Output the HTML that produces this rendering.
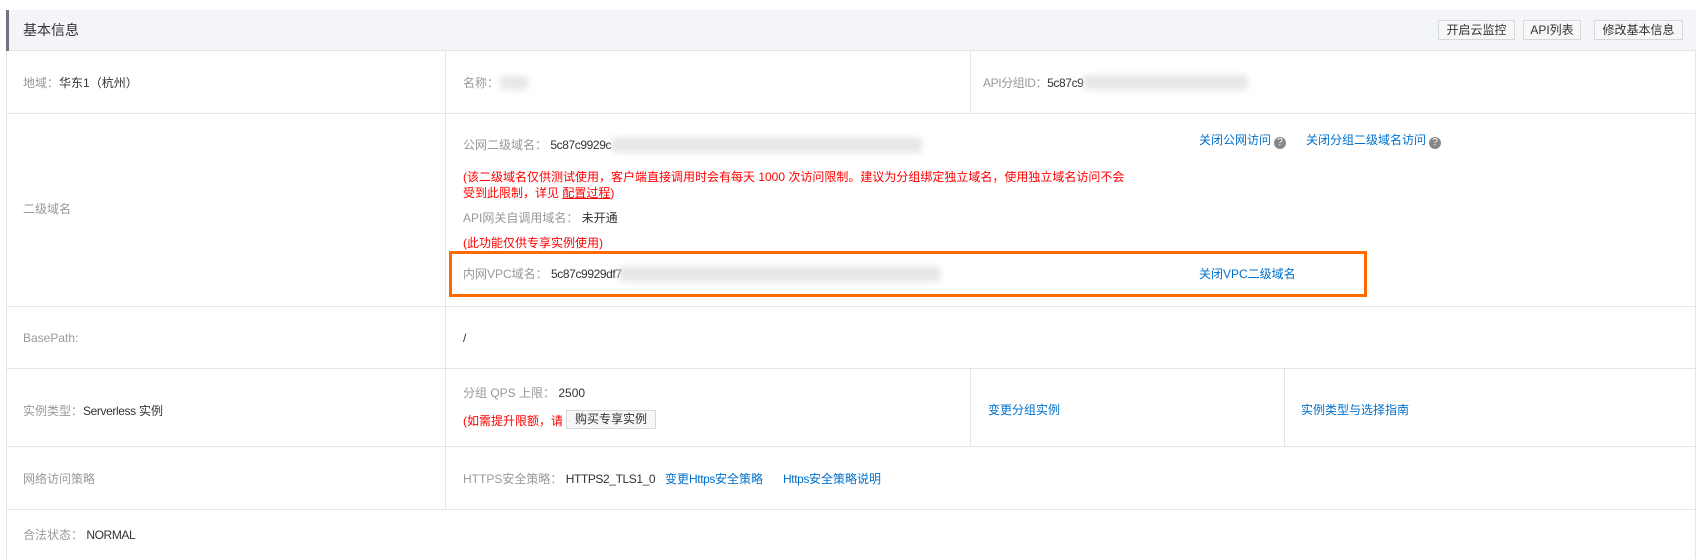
<!DOCTYPE html>
<html><head><meta charset="utf-8"><style>
*{margin:0;padding:0;box-sizing:border-box}
body{width:1705px;height:559px;background:#fff;position:relative;overflow:hidden;font-family:"Liberation Sans","Noto Sans CJK SC",sans-serif;font-size:12px;color:#333}
.a{position:absolute;white-space:nowrap;line-height:16px}
.g{color:#999}
.l{color:#0070cc}
.r{color:#f00}
.n{letter-spacing:-0.4px}
.hl{position:absolute;height:1px;background:#e3e5e8}
.vl{position:absolute;width:1px;background:#e3e5e8}
.blur{position:absolute;background:#e2e2e2;filter:blur(3px);border-radius:4px;opacity:.8}
.btn{position:absolute;border:1px solid #d5d8dc;background:#f7f7f7;font-size:12px;text-align:center;line-height:18px;color:#333}
.q{display:inline-block;width:12px;height:12px;border-radius:50%;background:#888;color:#fff;font-size:10px;line-height:12px;text-align:center;vertical-align:-1px;margin-left:3px}
</style></head><body>
<div style="position:absolute;left:6px;top:10px;width:1690px;height:549px;border:1px solid #e3e5e8;border-bottom:none"></div>
<div style="position:absolute;left:6px;top:10px;width:1690px;height:41px;background:#f4f5f8;border-bottom:1px solid #e3e5e8"></div>
<div style="position:absolute;left:6px;top:10px;width:3px;height:41px;background:#73737f"></div>
<div class="a" style="left:23px;top:21px;font-size:14px;line-height:18px">基本信息</div>
<div class="btn" style="left:1438px;top:20px;width:77px;height:20px">开启云监控</div>
<div class="btn" style="left:1523px;top:20px;width:58px;height:20px">API列表</div>
<div class="btn" style="left:1594px;top:20px;width:89px;height:20px">修改基本信息</div>

<div class="hl" style="left:6px;top:113px;width:1690px"></div>
<div class="hl" style="left:6px;top:306px;width:1690px"></div>
<div class="hl" style="left:6px;top:368px;width:1690px"></div>
<div class="hl" style="left:6px;top:446px;width:1690px"></div>
<div class="hl" style="left:6px;top:509px;width:1690px"></div>
<div class="vl" style="left:445px;top:51px;height:458px"></div>
<div class="vl" style="left:970px;top:51px;height:62px"></div>
<div class="vl" style="left:970px;top:368px;height:78px"></div>
<div class="vl" style="left:1284px;top:368px;height:78px"></div>

<div class="a" style="left:23px;top:75px"><span class="g">地域：</span>华东1（杭州）</div>
<div class="a g" style="left:463px;top:75px">名称：</div>
<div class="blur" style="left:500px;top:76px;width:28px;height:14px"></div>
<div class="a n" style="left:983px;top:75px"><span class="g">API分组ID：</span>5c87c9</div>
<div class="blur" style="left:1083px;top:75px;width:165px;height:15px"></div>

<div class="a g" style="left:23px;top:201px">二级域名</div>
<div class="a" style="left:463px;top:137px"><span class="g">公网二级域名：</span>&nbsp;<span class="n">5c87c9929c</span></div>
<div class="blur" style="left:612px;top:137px;width:310px;height:16px"></div>
<div class="a l" style="left:1199px;top:132px">关闭公网访问<span class="q">?</span></div>
<div class="a l" style="left:1306px;top:132px">关闭分组二级域名访问<span class="q">?</span></div>
<div class="a r" style="left:463px;top:169px">(该二级域名仅供测试使用，客户端直接调用时会有每天 1000 次访问限制。建议为分组绑定独立域名，使用独立域名访问不会</div>
<div class="a r" style="left:463px;top:185px">受到此限制，详见 <u>配置过程</u>)</div>
<div class="a" style="left:463px;top:210px"><span class="g">API网关自调用域名：</span>&nbsp;未开通</div>
<div class="a r" style="left:463px;top:235px">(此功能仅供专享实例使用)</div>
<div style="position:absolute;left:449px;top:251px;width:918px;height:46px;border:3px solid #ff6a00"></div>
<div class="a" style="left:463px;top:266px"><span class="g">内网VPC域名：</span>&nbsp;<span class="n">5c87c9929df7</span></div>
<div class="blur" style="left:619px;top:266px;width:322px;height:16px"></div>
<div class="a l" style="left:1199px;top:266px">关闭VPC二级域名</div>

<div class="a g" style="left:23px;top:330px">BasePath:</div>
<div class="a" style="left:463px;top:330px">/</div>

<div class="a" style="left:23px;top:403px"><span class="g">实例类型：</span><span class="n">Serverless</span> 实例</div>
<div class="a" style="left:463px;top:385px"><span class="g">分组 QPS 上限：</span>&nbsp;2500</div>
<div class="a r" style="left:463px;top:413px">(如需提升限额，请</div>
<div class="btn" style="left:566px;top:410px;width:90px;height:19px;line-height:17px">购买专享实例</div>
<div class="a l" style="left:988px;top:402px">变更分组实例</div>
<div class="a l" style="left:1301px;top:402px">实例类型与选择指南</div>

<div class="a g" style="left:23px;top:471px">网络访问策略</div>
<div class="a" style="left:463px;top:471px"><span class="g">HTTPS安全策略：</span>&nbsp;<span class="n">HTTPS2_TLS1_0</span></div>
<div class="a l" style="left:665px;top:471px">变更<span class="n">Https</span>安全策略</div>
<div class="a l" style="left:783px;top:471px"><span class="n">Https</span>安全策略说明</div>

<div class="a" style="left:23px;top:527px"><span class="g">合法状态：</span>&nbsp;<span class="n">NORMAL</span></div>
</body></html>
